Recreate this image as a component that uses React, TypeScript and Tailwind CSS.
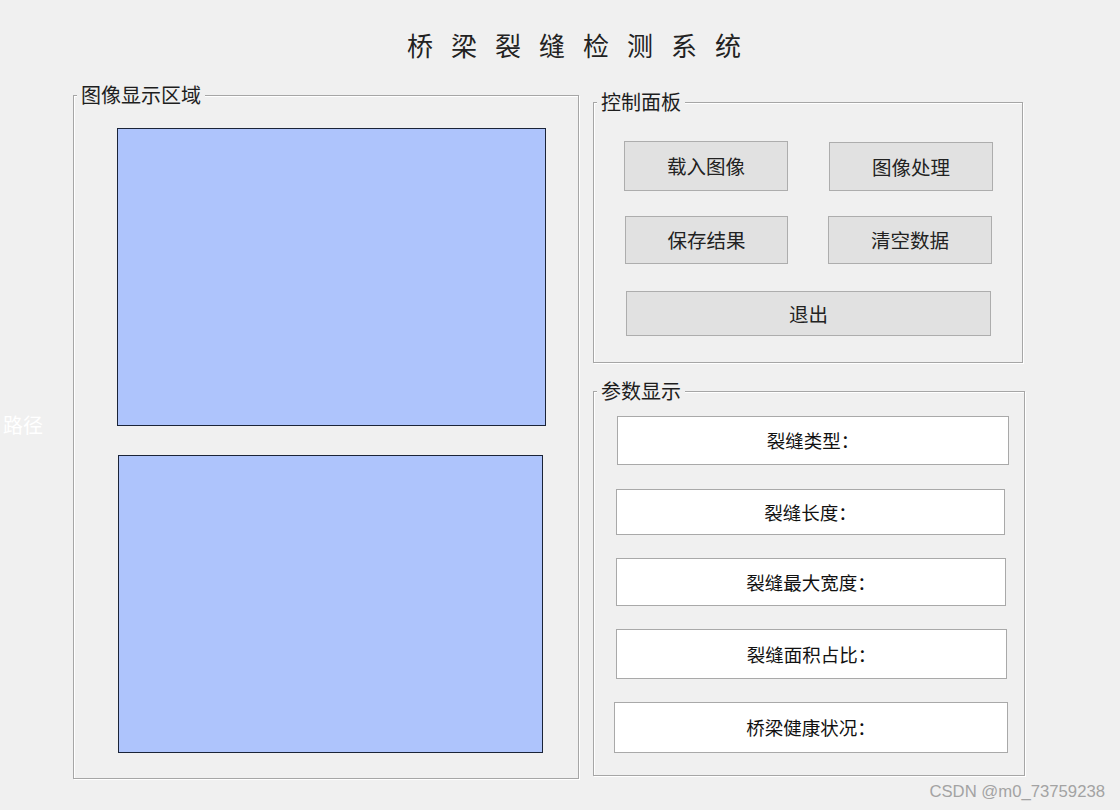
import React from "react";

const FONT = { fontFamily: '"Noto Sans CJK SC", "Noto Sans", sans-serif' };

function GroupBox({
  title,
  className,
  children,
}: {
  title: string;
  className: string;
  children: React.ReactNode;
}) {
  return (
    <div
      className={`relative border border-[#a6a6a6] shadow-[inset_1px_1px_0_#ffffff,1px_1px_0_#ffffff] ${className}`}
    >
      <span className="absolute left-[3px] top-[-13px] bg-[#f0f0f0] px-[4px] text-[20px] leading-[24px] text-[#1e1e1e]">
        {title}
      </span>
      {children}
    </div>
  );
}

function Btn({ label, className }: { label: string; className: string }) {
  return (
    <div
      className={`flex items-center justify-center border border-[#adadad] bg-[#e1e1e1] text-[19.5px] leading-none text-[#222222] ${className}`}
    >
      {label}
    </div>
  );
}

function Field({ label, className }: { label: string; className: string }) {
  return (
    <div
      className={`flex items-center justify-center border border-[#a9a9a9] bg-white text-[18.5px] leading-none text-[#111111] ${className}`}
    >
      {label}
    </div>
  );
}

export default function App() {
  return (
    <div
      className="flex h-[810px] w-[1120px] flex-col overflow-hidden bg-[#f0f0f0]"
      style={FONT}
    >
      <div className="h-[95px] pl-[407px] pt-[29px]">
        <div className="text-[26px] leading-[32px] tracking-[18px] text-[#222222]">
          桥梁裂缝检测系统
        </div>
      </div>
      <div className="flex items-start">
        <div className="w-[73px] pl-[3px] pt-[318px] text-[20px] leading-[24px] text-white">
          路径
        </div>
        <GroupBox title="图像显示区域" className="h-[684px] w-[506px]">
          <div className="flex flex-col pt-[32px]">
            <div className="ml-[43px] h-[298px] w-[429px] border border-[#1b2438] bg-[#aec4fc]" />
            <div className="ml-[44px] mt-[29px] h-[298px] w-[425px] border border-[#1b2438] bg-[#aec4fc]" />
          </div>
        </GroupBox>
        <div className="ml-[14px] mt-[7px] flex flex-col">
          <GroupBox title="控制面板" className="h-[261px] w-[430px]">
            <div className="flex flex-col pt-[38px]">
              <div className="flex">
                <Btn label="载入图像" className="ml-[30px] h-[50px] w-[164px]" />
                <Btn label="图像处理" className="ml-[41px] mt-[1px] h-[49px] w-[164px]" />
              </div>
              <div className="mt-[25px] flex">
                <Btn label="保存结果" className="ml-[31px] h-[48px] w-[163px]" />
                <Btn label="清空数据" className="ml-[40px] h-[48px] w-[164px]" />
              </div>
              <Btn label="退出" className="ml-[32px] mt-[27px] h-[45px] w-[365px]" />
            </div>
          </GroupBox>
          <GroupBox title="参数显示" className="mt-[28px] h-[385px] w-[432px]">
            <div className="flex flex-col pt-[24px]">
              <Field label="裂缝类型：" className="ml-[23px] h-[49px] w-[392px]" />
              <Field label="裂缝长度：" className="ml-[22px] mt-[24px] h-[46px] w-[389px]" />
              <Field label="裂缝最大宽度：" className="ml-[22px] mt-[23px] h-[48px] w-[390px]" />
              <Field label="裂缝面积占比：" className="ml-[22px] mt-[23px] h-[50px] w-[391px]" />
              <Field label="桥梁健康状况：" className="ml-[20px] mt-[23px] h-[51px] w-[394px]" />
            </div>
          </GroupBox>
        </div>
      </div>
      <div className="flex justify-end pr-[15px] pt-[3px]">
        <span
          className="text-[16.7px] leading-[20px] text-[#a3a3a3]"
          style={{ fontFamily: '"Liberation Sans", Arial, sans-serif' }}
        >
          CSDN @m0_73759238
        </span>
      </div>
    </div>
  );
}
